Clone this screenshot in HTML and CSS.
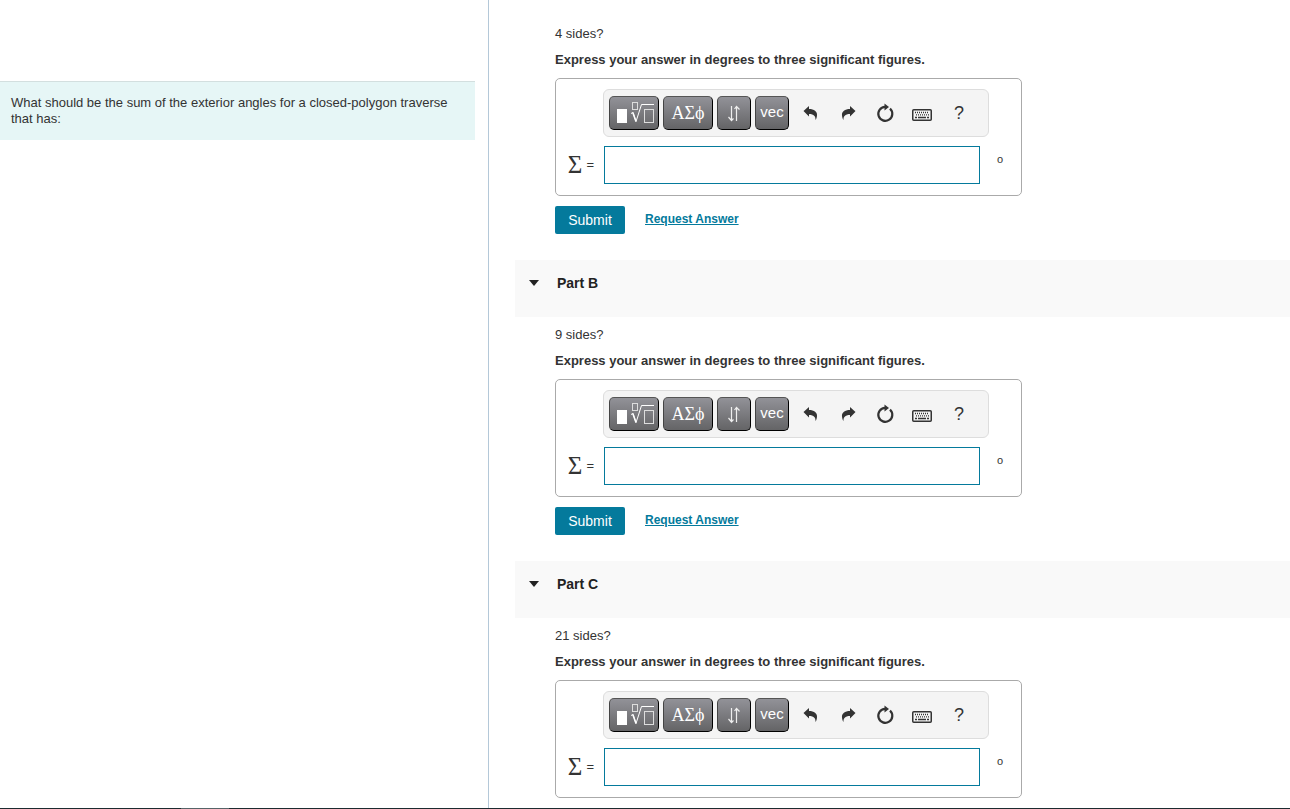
FILE: index.html
```html
<!DOCTYPE html>
<html lang="en">
<head>
  <meta charset="UTF-8">
  <title>Exterior angles</title>
  <link rel="stylesheet" href="styles.css">
</head>
<body>
  <div class="page">
    <aside class="intro">
      <div class="intro-text">What should be the sum of the exterior angles for a closed-polygon traverse that has:</div>
    </aside>
    <main class="parts" id="parts"></main>
  </div>
  <div class="taskbar"><span class="taskbar-item"></span></div>

  <!-- One part of the problem -->
  <template id="partTemplate">
    <section class="part">
      <h2 class="part-header">
        <button type="button" class="part-toggle">
          <svg width="10" height="6" viewBox="0 0 10 6"><path d="M0 0H10L5 6Z" fill="#222"/></svg>
          <span class="part-title"></span>
        </button>
      </h2>
      <form class="part-body">
        <p class="question"></p>
        <p class="instructions">Express your answer in degrees to three significant figures.</p>
        <div class="answer-box">
          <div class="toolbar">
            <button type="button" class="tool wide" aria-label="Templates">
              <svg width="40" height="24" viewBox="0 0 40 24" fill="none" stroke="#fff">
                <rect x="3" y="8" width="10" height="14" fill="#fff" stroke="none"/>
                <rect x="18.500" y="1.500" width="5" height="7" stroke="#ddd"/>
                <path d="M17 12.500L19 11.500L22 20.500L27.500 3.500H40"/>
                <path d="M18.800 11.500L22 20.500" stroke-width="1.500"/>
                <rect x="30.500" y="8.500" width="9" height="13" stroke="#ddd"/>
              </svg>
            </button>
            <button type="button" class="tool wide greek">ΑΣϕ</button>
            <button type="button" class="tool" aria-label="Arrows">
              <svg width="14" height="18" viewBox="0 0 14 18" fill="none" stroke="#eee" stroke-width="1.200">
                <path d="M4.500 2V16M1.500 13L4.500 16.500L6.500 14.500"/>
                <path d="M9.500 17V3M7.500 5L9.500 2.500L12.500 5.500"/>
              </svg>
            </button>
            <button type="button" class="tool vec">vec</button>
            <button type="button" class="icon" aria-label="Undo">
              <svg width="16" height="16" viewBox="0 0 16 16" fill="#333"><path d="M0.500 6L6 1V4C11 4 14.500 6.500 14 10.500C13.800 12.500 13.200 14 12.500 15C12.800 11.500 11 9 6 9V11.500Z"/></svg>
            </button>
            <button type="button" class="icon" aria-label="Redo">
              <svg width="16" height="16" viewBox="0 0 16 16" fill="#333"><path d="M15.500 6L10 1V4C5 4 1.500 6.500 2 10.500C2.200 12.500 2.800 14 3.500 15C3.200 11.500 5 9 10 9V11.500Z"/></svg>
            </button>
            <button type="button" class="icon" aria-label="Reset">
              <svg width="20" height="20" viewBox="0 0 20 20">
                <path d="M15 5.600A7 7 0 1 1 10 3.800" fill="none" stroke="#333" stroke-width="2.200"/>
                <path d="M9.500 0.500L14 4L9.500 7.500Z" fill="#333"/>
              </svg>
            </button>
            <button type="button" class="icon keyboard" aria-label="Keyboard shortcuts">
              <svg width="20" height="12" viewBox="0 0 20 12" fill="none" stroke="#333">
                <rect x="0.750" y="0.750" width="18.500" height="10.500" rx="1" stroke-width="1.500"/>
                <path d="M3 3.500H17" stroke-dasharray="1 1" stroke-width="1.300"/>
                <path d="M4 5.900H17" stroke-dasharray="1 1" stroke-width="1.300"/>
                <path d="M3 8.500H5M6 8.500H14M15 8.500H17" stroke-width="1.300"/>
              </svg>
            </button>
            <button type="button" class="icon help" aria-label="Help">?</button>
          </div>
          <label class="answer-label"><span class="sum">Σ</span>=</label>
          <input type="text" class="answer-input" autocomplete="off">
          <span class="unit">o</span>
        </div>
        <div class="actions">
          <button type="submit" class="submit">Submit</button>
          <a href="#" class="request">Request Answer</a>
        </div>
      </form>
    </section>
  </template>

  <script>
    const parts = [
      { id: 'A', question: '4 sides?', header: false, actions: true },
      { id: 'B', question: '9 sides?', header: true, actions: true },
      { id: 'C', question: '21 sides?', header: true, actions: false }
    ];

    const list = document.getElementById('parts');
    const template = document.getElementById('partTemplate');

    parts.forEach(part => {
      const node = template.content.cloneNode(true);
      node.querySelector('.part-title').textContent = 'Part ' + part.id;
      node.querySelector('.question').textContent = part.question;
      node.querySelector('.answer-label').htmlFor = 'answer' + part.id;
      node.querySelector('.answer-input').id = 'answer' + part.id;
      node.querySelector('form').addEventListener('submit', e => e.preventDefault());
      if (!part.header) {
        node.querySelector('.part-header').remove();
      }
      if (!part.actions) {
        node.querySelector('.actions').remove();
      }
      list.appendChild(node);
    });
  </script>
</body>
</html>
```
FILE: styles.css
```css
* {
  box-sizing: border-box;
}
body {
  margin: 0;
  height: 100vh;
  display: flex;
  flex-direction: column;
  overflow: hidden;
  font-family: "Liberation Sans", Arial, sans-serif;
  font-size: 13px;
  line-height: 16px;
  color: #333;
  background: #fff;
}
button {
  font-family: inherit;
  padding: 0;
  border: none;
  background: none;
  cursor: pointer;
}
.page {
  flex: 1;
  min-height: 0;
  display: flex;
}
.intro {
  width: 489px;
  flex-shrink: 0;
  padding: 81px 13px 0 0;
  border-right: 1px solid #b4c8d8;
}
.intro-text {
  padding: 13px 14px 13px 11px;
  border-top: 1px solid #d3dfdf;
  background: #e6f6f6;
}
.parts {
  flex: 1;
  min-width: 0;
  padding: 16px 0 0 26px;
  overflow: hidden;
}
.part-header {
  margin: 0;
  height: 57px;
  padding: 14px;
  background: #f9f9f9;
  line-height: 18px;
}
.part-toggle {
  display: flex;
  align-items: center;
  gap: 18px;
  font-size: 14px;
  line-height: 18px;
  font-weight: bold;
  color: #222;
}
.part-body {
  padding: 10px 0 26px 40px;
}
.question,
.instructions {
  margin: 0 0 10px;
}
.instructions {
  font-weight: bold;
}
.answer-box {
  width: 467px;
  display: grid;
  grid-template-columns: 48px 376px 1fr;
  row-gap: 9px;
  padding: 10px 0 11px;
  border: 1px solid #aaa;
  border-radius: 5px;
}
.toolbar {
  grid-column: 2 / 4;
  width: 386px;
  height: 48px;
  margin-left: -1px;
  padding: 0 5px;
  display: flex;
  align-items: center;
  border: 1px solid #ddd;
  border-radius: 6px;
  background: #f4f4f4;
}
.tool {
  width: 34px;
  height: 34px;
  margin-right: 4px;
  display: flex;
  align-items: center;
  justify-content: center;
  border: 1px solid #000;
  border-top-color: #555;
  border-left-color: #444;
  border-radius: 5px;
  background: linear-gradient(#929298, #646466);
  color: #fff;
}
.wide {
  width: 50px;
}
.greek {
  font-family: "Liberation Serif", "DejaVu Serif", serif;
  font-size: 18px;
}
.vec {
  padding-bottom: 3px;
  font-size: 15px;
}
.icon {
  width: 37px;
  height: 34px;
  padding-right: 1px;
  display: flex;
  align-items: center;
  justify-content: center;
  color: #333;
}
.keyboard {
  padding-top: 4px;
}
.help {
  font-size: 18px;
}
.answer-label {
  display: flex;
  align-items: center;
  justify-content: flex-end;
  gap: 4px;
  padding-right: 10px;
}
.sum {
  font-family: "Liberation Serif", serif;
  font-size: 25px;
}
.answer-input {
  height: 38px;
  padding: 0 8px;
  border: 1px solid #047a9c;
  background: #fff;
  font-family: inherit;
  font-size: 16px;
  outline: none;
}
.unit {
  padding: 5px 0 0 17px;
  font-size: 11px;
}
.actions {
  display: flex;
  gap: 20px;
  margin-top: 10px;
}
.submit {
  width: 70px;
  height: 28px;
  border-radius: 2px;
  background: #047a9c;
  color: #fff;
  font-size: 14px;
}
.request {
  padding-top: 5px;
  font-size: 12px;
  font-weight: bold;
  color: #047a9c;
}
.taskbar {
  height: 1px;
  flex-shrink: 0;
  padding-left: 181px;
  background: #1d2b30;
}
.taskbar-item {
  display: block;
  width: 48px;
  height: 1px;
  background: #566468;
}
```
